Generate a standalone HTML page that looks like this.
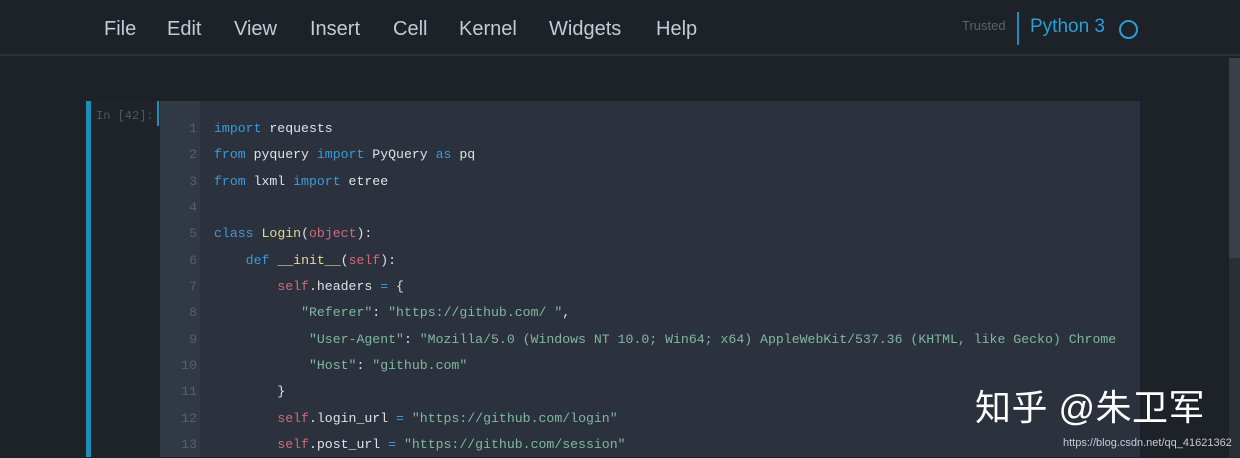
<!DOCTYPE html>
<html><head><meta charset="utf-8"><style>
*{margin:0;padding:0;box-sizing:border-box}
body{width:1240px;height:457px;overflow:hidden;background:#1d2128;position:relative;font-family:"Liberation Sans",sans-serif}
.nav{position:absolute;left:0;top:0;width:1240px;height:56px;background:#1d2128;border-bottom:2px solid #2c323a}
.m{position:absolute;top:18px;font-size:20px;color:#c3cbd6}
.sb{position:absolute;left:1229px;top:58px;width:11px;height:399px;background:#2a2f37}
.sbt{position:absolute;left:1229px;top:58px;width:11px;height:200px;background:#3a4049}
.cell{position:absolute;left:86px;top:101px;width:1054px;height:356px;background:#2b323d}
.bar{position:absolute;left:86px;top:101px;width:5px;height:356px;background:#1e8fb8}
.pr{position:absolute;left:91px;top:101px;width:69px;height:356px;background:#1f242b}
.pl{position:absolute;left:157px;top:101px;width:2px;height:25px;background:#1e8fb8}
.gut{position:absolute;left:160px;top:101px;width:40px;height:356px;background:#313945}
.code{position:absolute;left:0;top:116px;font-family:"Liberation Mono",monospace;font-size:13.2px;line-height:26.33px;color:#dfe3e8;white-space:pre}
.ln{position:absolute;left:160px;width:37px;top:116px;text-align:right;font-family:"Liberation Mono",monospace;font-size:13.2px;line-height:26.33px;color:#56606c;white-space:pre}
.k{color:#3b9ad9}.s{color:#7fb8a0}.r{color:#d0697a}.y{color:#e5d98e}.o{color:#3b9ad9}
</style></head><body>
<div class="nav">
<span class="m" style="left:104px">File</span>
<span class="m" style="left:167px">Edit</span>
<span class="m" style="left:234px">View</span>
<span class="m" style="left:310px">Insert</span>
<span class="m" style="left:393px">Cell</span>
<span class="m" style="left:459px">Kernel</span>
<span class="m" style="left:549px">Widgets</span>
<span class="m" style="left:656px">Help</span>
<span style="position:absolute;left:962px;top:18px;font-size:13px;color:#5a626d">Trusted</span>
<div style="position:absolute;left:1017px;top:12px;width:2px;height:33px;background:#1e8fb8"></div>
<span style="position:absolute;left:1030px;top:16px;font-size:19px;color:#2a9fd6">Python 3</span>
<div style="position:absolute;left:1119px;top:20px;width:19px;height:19px;border:2px solid #2a9fd6;border-radius:50%"></div>
</div>
<div class="sb"></div><div class="sbt"></div>
<div class="cell"></div><div class="pr"></div><div class="bar"></div><div class="pl"></div><div class="gut"></div>
<div style="position:absolute;left:96px;top:109px;font-family:'Liberation Mono',monospace;font-size:12px;color:#4e5661">In  [42]:</div>
<div class="ln">1
2
3
4
5
6
7
8
9
10
11
12
13</div>
<div class="code" style="left:214px"><span class="k">import</span> requests
<span class="k">from</span> pyquery <span class="k">import</span> PyQuery <span class="k">as</span> pq
<span class="k">from</span> lxml <span class="k">import</span> etree

<span class="k">class</span> <span class="y">Login</span>(<span class="r">object</span>):
    <span class="k">def</span> <span class="y">__init__</span>(<span class="r">self</span>):
        <span class="r">self</span>.headers <span class="o">=</span> {
           <span class="s">"Referer"</span>: <span class="s">"https://github.com/ "</span>,
            <span class="s">"User-Agent"</span>: <span class="s">"Mozilla/5.0 (Windows NT 10.0; Win64; x64) AppleWebKit/537.36 (KHTML, like Gecko) Chrome</span>
            <span class="s">"Host"</span>: <span class="s">"github.com"</span>
        }
        <span class="r">self</span>.login_url <span class="o">=</span> <span class="s">"https://github.com/login"</span>
        <span class="r">self</span>.post_url <span class="o">=</span> <span class="s">"https://github.com/session"</span></div>
<div style="position:absolute;left:1120px;top:101px;width:20px;height:356px;background:#2b323d"></div>
<div style="position:absolute;left:975px;top:379px;font-family:'Liberation Sans','Noto Sans CJK SC',sans-serif;font-size:36px;color:#ffffff;white-space:nowrap;letter-spacing:0.5px">知乎 @朱卫军</div>
<div style="position:absolute;left:1063px;top:437px;font-size:11px;color:#c8ccd2;white-space:nowrap">https://blog.csdn.net/qq_41621362</div>
</body></html>
